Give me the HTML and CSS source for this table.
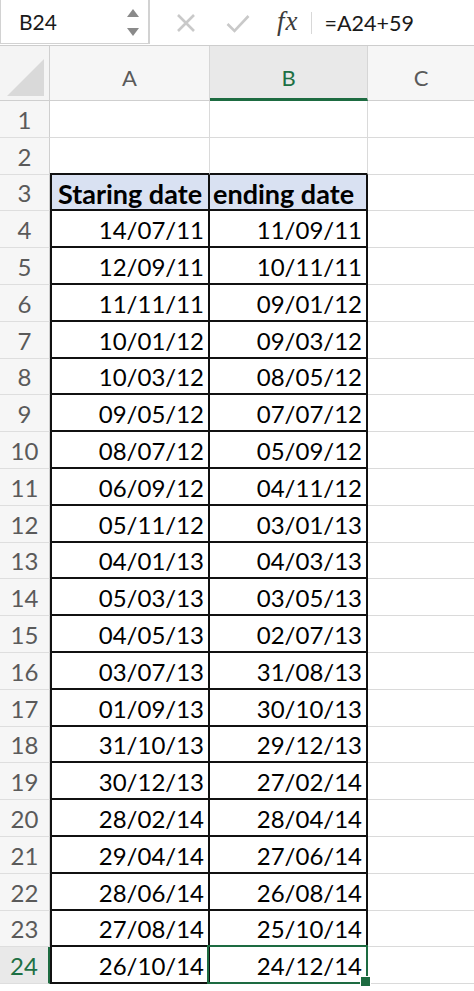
FILE: index.html
```html
<!DOCTYPE html>
<html>
<head>
<meta charset="utf-8">
<link rel="stylesheet" href="styles.css">
</head>
<body>
<div class="formula-bar">
  <div class="name-box">
    <span class="name">B24</span>
    <svg class="spinner" width="14" height="30" viewBox="0 0 14 30">
      <path d="M1 9 L7 1 L13 9 Z" fill="#8a8a8a"/>
      <path d="M1 20 L13 20 L7 28 Z" fill="#8a8a8a"/>
    </svg>
  </div>
  <div class="fb-btns">
    <svg class="fb-x" width="20" height="20" viewBox="0 0 20 20"><path d="M2 2 L18 18 M18 2 L2 18" stroke="#c9c9c9" stroke-width="2.6" fill="none"/></svg>
    <svg class="fb-check" width="24" height="20" viewBox="0 0 24 20"><path d="M1.5 10 L8.5 17 L22.5 2" stroke="#c9c9c9" stroke-width="2.6" fill="none"/></svg>
    <span class="fx">fx</span>
  </div>
  <div class="fb-sep"></div>
  <div class="formula">=A24+59</div>
</div>
<div class="sheet" id="sheet">
  <div class="corner"><svg width="38" height="38" viewBox="0 0 38 38"><path d="M0 38 L37 1 L37 38 Z" fill="#d9d9d9"/></svg></div>
  <div class="colhead">A</div>
  <div class="colhead active">B</div>
  <div class="colhead last">C</div>

  <div class="rowhead">1</div><div class="cell"></div><div class="cell"></div><div class="cell last"></div>
  <div class="rowhead">2</div><div class="cell above-a"></div><div class="cell above-b"></div><div class="cell last"></div>
  <div class="rowhead">3</div><div class="cell t ta th">Staring date</div><div class="cell t tb th">ending date</div><div class="cell last"></div>
  <div class="rowhead">4</div><div class="cell t ta">14/07/11</div><div class="cell t tb">11/09/11</div><div class="cell last"></div>
  <div class="rowhead">5</div><div class="cell t ta">12/09/11</div><div class="cell t tb">10/11/11</div><div class="cell last"></div>
  <div class="rowhead">6</div><div class="cell t ta">11/11/11</div><div class="cell t tb">09/01/12</div><div class="cell last"></div>
  <div class="rowhead">7</div><div class="cell t ta">10/01/12</div><div class="cell t tb">09/03/12</div><div class="cell last"></div>
  <div class="rowhead">8</div><div class="cell t ta">10/03/12</div><div class="cell t tb">08/05/12</div><div class="cell last"></div>
  <div class="rowhead">9</div><div class="cell t ta">09/05/12</div><div class="cell t tb">07/07/12</div><div class="cell last"></div>
  <div class="rowhead">10</div><div class="cell t ta">08/07/12</div><div class="cell t tb">05/09/12</div><div class="cell last"></div>
  <div class="rowhead">11</div><div class="cell t ta">06/09/12</div><div class="cell t tb">04/11/12</div><div class="cell last"></div>
  <div class="rowhead">12</div><div class="cell t ta">05/11/12</div><div class="cell t tb">03/01/13</div><div class="cell last"></div>
  <div class="rowhead">13</div><div class="cell t ta">04/01/13</div><div class="cell t tb">04/03/13</div><div class="cell last"></div>
  <div class="rowhead">14</div><div class="cell t ta">05/03/13</div><div class="cell t tb">03/05/13</div><div class="cell last"></div>
  <div class="rowhead">15</div><div class="cell t ta">04/05/13</div><div class="cell t tb">02/07/13</div><div class="cell last"></div>
  <div class="rowhead">16</div><div class="cell t ta">03/07/13</div><div class="cell t tb">31/08/13</div><div class="cell last"></div>
  <div class="rowhead">17</div><div class="cell t ta">01/09/13</div><div class="cell t tb">30/10/13</div><div class="cell last"></div>
  <div class="rowhead">18</div><div class="cell t ta">31/10/13</div><div class="cell t tb">29/12/13</div><div class="cell last"></div>
  <div class="rowhead">19</div><div class="cell t ta">30/12/13</div><div class="cell t tb">27/02/14</div><div class="cell last"></div>
  <div class="rowhead">20</div><div class="cell t ta">28/02/14</div><div class="cell t tb">28/04/14</div><div class="cell last"></div>
  <div class="rowhead">21</div><div class="cell t ta">29/04/14</div><div class="cell t tb">27/06/14</div><div class="cell last"></div>
  <div class="rowhead">22</div><div class="cell t ta">28/06/14</div><div class="cell t tb">26/08/14</div><div class="cell last"></div>
  <div class="rowhead">23</div><div class="cell t ta">27/08/14</div><div class="cell t tb">25/10/14</div><div class="cell last"></div>
  <div class="rowhead active">24</div><div class="cell t ta">26/10/14</div><div class="cell t tb selected">24/12/14</div><div class="cell last"></div>
</div>
</body>
</html>
```
FILE: styles.css
```css
* { box-sizing: border-box; }
html, body {
  margin: 0;
  padding: 0;
  background: #fff;
  width: 474px;
  height: 991px;
  overflow: hidden;
  font-family: Lato, "Open Sans", sans-serif;
}

.formula-bar {
  display: flex;
  align-items: center;
  height: 46px;
  border-bottom: 1px solid #cdcdcd;
  background: #fff;
}
.name-box {
  display: flex;
  align-items: center;
  justify-content: space-between;
  align-self: flex-start;
  width: 150px;
  height: 44px;
  border-left: 1px solid #d2d2d2;
  border-right: 2px solid #d2d2d2;
  border-bottom: 1px solid #d2d2d2;
  padding: 0 8px 0 18px;
}
.name {
  font-size: 21px;
  color: #1a1a1a;
}
.spinner { margin-top: 2px; }
.fb-btns {
  display: flex;
  align-items: center;
  margin-left: 26px;
  height: 44px;
}
.fb-check { margin-left: 30px; margin-top: 2px; }
.fx {
  font-family: "Liberation Serif", "DejaVu Serif", serif;
  font-style: italic;
  font-size: 27px;
  color: #3c3c3c;
  margin-left: 27px;
  margin-top: -2px;
  letter-spacing: 1px;
}
.fb-sep {
  width: 1px;
  height: 22px;
  background: #d8d8d8;
  margin-left: 12px;
}
.formula {
  margin-left: 13px;
  font-size: 21.5px;
  color: #1a1a1a;
}

.sheet {
  display: grid;
  grid-template-columns: 50px 160px 158px 106px;
  grid-template-rows: 55px repeat(24, 36.8px);
}
.corner {
  background: #f4f4f4;
  border-right: 1px solid #cfcfcf;
  border-bottom: 1px solid #cfcfcf;
  display: flex;
  align-items: flex-end;
  padding: 0 0 4px 7px;
}
.colhead {
  background: #f6f6f6;
  border-right: 1px solid #d6d6d6;
  border-bottom: 1px solid #cfcfcf;
  display: flex;
  align-items: center;
  justify-content: center;
  font-size: 22px;
  color: #5a5a5a;
  padding-top: 8px;
}
.colhead.last { border-right: 0; }
.colhead.active {
  background: #e9e9e9;
  color: #1d7044;
  border-bottom: 3px solid #1d6b41;
  padding-top: 10px;
}
.rowhead {
  background: #f6f6f6;
  border-right: 1px solid #cfcfcf;
  border-bottom: 1px solid #dedede;
  display: flex;
  align-items: center;
  justify-content: center;
  font-size: 24px;
  color: #5a5a5a;
  padding-top: 1px;
}
.rowhead.active {
  background: #e9e9e9;
  color: #1d7044;
  border-right: 2px solid #1d6b41;
}
.cell {
  border-right: 1px solid #dadada;
  border-bottom: 1px solid #dadada;
  display: flex;
  align-items: center;
  justify-content: flex-end;
  padding-right: 4px;
  padding-top: 2px;
  font-size: 24px;
  color: #000;
}
.cell.last { border-right: 0; }
.cell.above-a, .cell.above-b { border-bottom: 2px solid #111; }
.cell.t {
  border-bottom: 2px solid #111;
  border-right: 2px solid #111;
}
.cell.ta { border-left: 2px solid #111; }
.cell.th {
  background: #d9e1f2;
  font-weight: bold;
  font-size: 27px;
  justify-content: center;
  padding: 2px 0 0 0;
  white-space: nowrap;
}
.cell.tb.th { justify-content: flex-start; padding-left: 3px; }
.cell.selected { position: relative; }
.cell.selected::after {
  content: "";
  position: absolute;
  top: -2px;
  left: -3px;
  right: -2px;
  bottom: -2px;
  border: 2px solid #1d6b41;
}
.cell.selected::before {
  content: "";
  position: absolute;
  right: -5px;
  bottom: -5px;
  width: 9px;
  height: 9px;
  background: #1d6b41;
  border: 1px solid #fff;
  z-index: 2;
}
```
